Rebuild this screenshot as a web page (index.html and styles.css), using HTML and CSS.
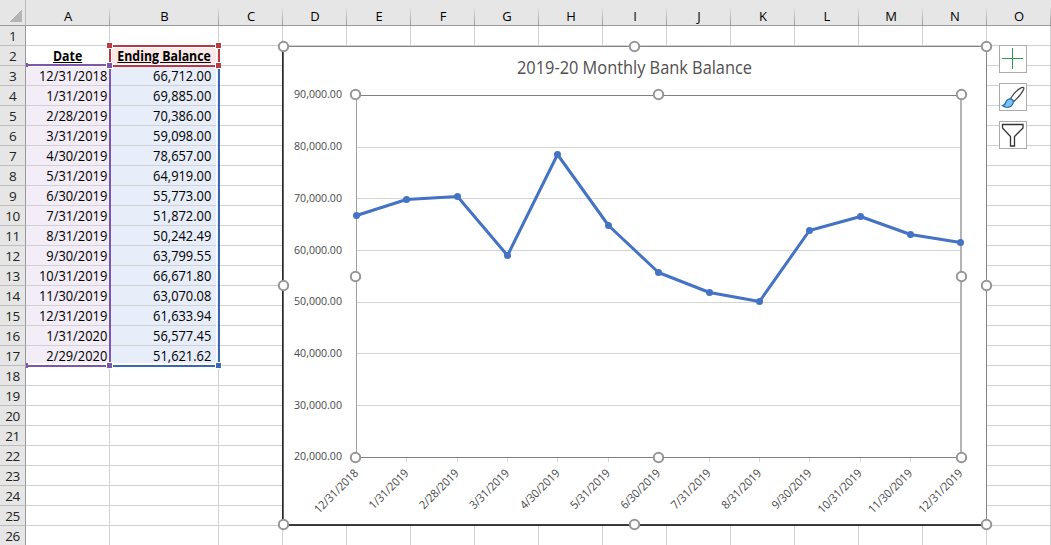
FILE: index.html
```
<!DOCTYPE html>
<html lang="en">
<head>
  <meta charset="UTF-8">
  <meta name="viewport" content="width=device-width, initial-scale=1.0">
  <title>Monthly Bank Balance</title>
  <link rel="stylesheet" href="styles.css">
</head>
<body>
  <div class="sheet">
    <table class="grid">
      <colgroup>
        <col class="col-num"><col class="col-a"><col class="col-b">
        <col class="col"><col class="col"><col class="col"><col class="col"><col class="col"><col class="col"><col class="col"><col class="col"><col class="col"><col class="col"><col class="col"><col class="col"><col class="col">
      </colgroup>
      <thead>
        <tr>
          <th class="corner"></th>
          <th>A</th><th>B</th><th>C</th><th>D</th><th>E</th><th>F</th><th>G</th><th>H</th><th>I</th><th>J</th><th>K</th><th>L</th><th>M</th><th>N</th><th>O</th>
        </tr>
      </thead>
      <tbody>
        <tr><th>1</th><td></td><td></td><td class="rest" colspan="13"></td></tr>
        <tr><th>2</th><td class="title"><u>Date</u></td><td class="title series"><u>Ending Balance</u></td><td class="rest" colspan="13"></td></tr>
        <tr><th>3</th><td class="date"><span>12/31/2018</span></td><td class="amount"><span>66,712.00</span></td><td class="rest" colspan="13"></td></tr>
        <tr><th>4</th><td class="date"><span>1/31/2019</span></td><td class="amount"><span>69,885.00</span></td><td class="rest" colspan="13"></td></tr>
        <tr><th>5</th><td class="date"><span>2/28/2019</span></td><td class="amount"><span>70,386.00</span></td><td class="rest" colspan="13"></td></tr>
        <tr><th>6</th><td class="date"><span>3/31/2019</span></td><td class="amount"><span>59,098.00</span></td><td class="rest" colspan="13"></td></tr>
        <tr><th>7</th><td class="date"><span>4/30/2019</span></td><td class="amount"><span>78,657.00</span></td><td class="rest" colspan="13"></td></tr>
        <tr><th>8</th><td class="date"><span>5/31/2019</span></td><td class="amount"><span>64,919.00</span></td><td class="rest" colspan="13"></td></tr>
        <tr><th>9</th><td class="date"><span>6/30/2019</span></td><td class="amount"><span>55,773.00</span></td><td class="rest" colspan="13"></td></tr>
        <tr><th>10</th><td class="date"><span>7/31/2019</span></td><td class="amount"><span>51,872.00</span></td><td class="rest" colspan="13"></td></tr>
        <tr><th>11</th><td class="date"><span>8/31/2019</span></td><td class="amount"><span>50,242.49</span></td><td class="rest" colspan="13"></td></tr>
        <tr><th>12</th><td class="date"><span>9/30/2019</span></td><td class="amount"><span>63,799.55</span></td><td class="rest" colspan="13"></td></tr>
        <tr><th>13</th><td class="date"><span>10/31/2019</span></td><td class="amount"><span>66,671.80</span></td><td class="rest" colspan="13"></td></tr>
        <tr><th>14</th><td class="date"><span>11/30/2019</span></td><td class="amount"><span>63,070.08</span></td><td class="rest" colspan="13"></td></tr>
        <tr><th>15</th><td class="date"><span>12/31/2019</span></td><td class="amount"><span>61,633.94</span></td><td class="rest" colspan="13"></td></tr>
        <tr><th>16</th><td class="date"><span>1/31/2020</span></td><td class="amount"><span>56,577.45</span></td><td class="rest" colspan="13"></td></tr>
        <tr><th>17</th><td class="date"><span>2/29/2020</span></td><td class="amount"><span>51,621.62</span></td><td class="rest" colspan="13"></td></tr>
        <tr><th>18</th><td></td><td></td><td class="rest" colspan="13"></td></tr>
        <tr><th>19</th><td></td><td></td><td class="rest" colspan="13"></td></tr>
        <tr><th>20</th><td></td><td></td><td class="rest" colspan="13"></td></tr>
        <tr><th>21</th><td></td><td></td><td class="rest" colspan="13"></td></tr>
        <tr><th>22</th><td></td><td></td><td class="rest" colspan="13"></td></tr>
        <tr><th>23</th><td></td><td></td><td class="rest" colspan="13"></td></tr>
        <tr><th>24</th><td></td><td></td><td class="rest" colspan="13"></td></tr>
        <tr><th>25</th><td></td><td></td><td class="rest" colspan="13"></td></tr>
        <tr><th>26</th><td></td><td></td><td class="rest" colspan="13"></td></tr>
      </tbody>
    </table>

    <!-- coloured outlines of the chart's source ranges -->
    <svg class="ranges" width="200" height="330" viewBox="24 42 200 330" shape-rendering="crispEdges">
      <g fill="#fff">
        <rect x="26" y="66" width="83" height="1"/>
        <rect x="26" y="363" width="83" height="2"/>
        <rect x="111" y="363" width="107" height="2"/>
        <rect x="111" y="47" width="106" height="1"/>
        <rect x="111" y="64" width="106" height="1"/>
        <rect x="111" y="47" width="1" height="18"/>
        <rect x="216" y="47" width="1" height="18"/>
        <rect x="216" y="68" width="1" height="296"/>
      </g>
      <path fill="#7d57a8" d="M26 64h83v2h-83zM109 67h2v298h-2zM26 365h83v2h-83z"/>
      <path fill="#3a68b5" d="M218 68h2v297h-2zM111 365h107v2h-107z"/>
      <path fill="#b73a45" d="M110 45h108v2h-108zM110 65h108v2h-108zM109 46h2v20h-2zM218 46h2v20h-2z"/>
      <g stroke="#fff">
        <path fill="#b73a45" d="M106.500 42.500h6v6h-6zM215.500 42.500h6v6h-6zM215.500 62.500h6v6h-6z"/>
        <path fill="#7d57a8" d="M106.500 62.500h6v6h-6zM106.500 362.500h6v6h-6z"/>
        <path fill="#3a68b5" d="M215.500 362.500h6v6h-6z"/>
      </g>
      <path fill="#7d57a8" d="M26 63h2v4h-2zM26 363h2v5h-2z"/>
    </svg>

    <svg class="chart" width="716" height="492" viewBox="277 40 716 492">
      <rect x="283" y="46" width="703" height="479" fill="#fff"/>
      <path class="edge" d="M282.900 46V525H986"/>
      <g shape-rendering="crispEdges">
        <path class="frame" d="M283 46.500H986M986.500 46V525"/>
        <path class="rule" d="M356 147.500H961M356 198.500H961M356 250.500H961M356 302.500H961M356 353.500H961M356 405.500H961"/>
        <path class="rule" d="M406.500 458v4M457.500 458v4M507.500 458v4M557.500 458v4M608.500 458v4M658.500 458v4M709.500 458v4M759.500 458v4M809.500 458v4M860.500 458v4M910.500 458v4"/>
        <path class="plot" d="M356 95.500H961M356 457.500H961"/>
        <path class="plot side" d="M356.500 95V457"/>
        <path class="plot side wide" d="M961 95V457"/>
      </g>

      <text class="heading" x="517" y="74" textLength="235" lengthAdjust="spacingAndGlyphs">2019-20 Monthly Bank Balance</text>

      <g class="labels">
        <text x="294" y="98" textLength="48" lengthAdjust="spacingAndGlyphs">90,000.00</text>
        <text x="294" y="150" textLength="48" lengthAdjust="spacingAndGlyphs">80,000.00</text>
        <text x="294" y="202" textLength="48" lengthAdjust="spacingAndGlyphs">70,000.00</text>
        <text x="294" y="254" textLength="48" lengthAdjust="spacingAndGlyphs">60,000.00</text>
        <text x="294" y="305" textLength="48" lengthAdjust="spacingAndGlyphs">50,000.00</text>
        <text x="294" y="357" textLength="48" lengthAdjust="spacingAndGlyphs">40,000.00</text>
        <text x="294" y="409" textLength="48" lengthAdjust="spacingAndGlyphs">30,000.00</text>
        <text x="294" y="460" textLength="48" lengthAdjust="spacingAndGlyphs">20,000.00</text>
      </g>

      <g class="labels dates">
        <text transform="translate(359 474) rotate(-45) scale(.93 1)">12/31/2018</text>
        <text transform="translate(409.400 474) rotate(-45) scale(.93 1)">1/31/2019</text>
        <text transform="translate(459.700 474) rotate(-45) scale(.93 1)">2/28/2019</text>
        <text transform="translate(510 474) rotate(-45) scale(.93 1)">3/31/2019</text>
        <text transform="translate(560.500 474) rotate(-45) scale(.93 1)">4/30/2019</text>
        <text transform="translate(610.800 474) rotate(-45) scale(.93 1)">5/31/2019</text>
        <text transform="translate(661 474) rotate(-45) scale(.93 1)">6/30/2019</text>
        <text transform="translate(711.600 474) rotate(-45) scale(.93 1)">7/31/2019</text>
        <text transform="translate(762 474) rotate(-45) scale(.93 1)">8/31/2019</text>
        <text transform="translate(812.300 474) rotate(-45) scale(.93 1)">9/30/2019</text>
        <text transform="translate(862.700 474) rotate(-45) scale(.93 1)">10/31/2019</text>
        <text transform="translate(913 474) rotate(-45) scale(.93 1)">11/30/2019</text>
        <text transform="translate(963.400 474) rotate(-45) scale(.93 1)">12/31/2019</text>
      </g>

      <polyline class="line" points="356.500,215.500 406.500,199.500 457.500,196.500 507.500,255.500 557.500,154.500 608.500,225.500 658.500,272.500 709.500,292.500 759.500,301.500 809.500,230.500 860.500,216.500 910.500,234.500 960.500,242.500"/>
      <g class="dots">
        <circle cx="356.500" cy="215.500" r="3.500"/>
        <circle cx="406.500" cy="199.500" r="3.500"/>
        <circle cx="457.500" cy="196.500" r="3.500"/>
        <circle cx="507.500" cy="255.500" r="3.500"/>
        <circle cx="557.500" cy="154.500" r="3.500"/>
        <circle cx="608.500" cy="225.500" r="3.500"/>
        <circle cx="658.500" cy="272.500" r="3.500"/>
        <circle cx="709.500" cy="292.500" r="3.500"/>
        <circle cx="759.500" cy="301.500" r="3.500"/>
        <circle cx="809.500" cy="230.500" r="3.500"/>
        <circle cx="860.500" cy="216.500" r="3.500"/>
        <circle cx="910.500" cy="234.500" r="3.500"/>
        <circle cx="960.500" cy="242.500" r="3.500"/>
      </g>

      <g class="handles">
        <circle cx="283.500" cy="46.500" r="4.700"/>
        <circle cx="634.500" cy="46.500" r="4.700"/>
        <circle cx="986.500" cy="46.500" r="4.700"/>
        <circle cx="283.500" cy="285.500" r="4.700"/>
        <circle cx="986.500" cy="285.500" r="4.700"/>
        <circle cx="283.500" cy="524.500" r="4.700"/>
        <circle cx="634.500" cy="524.500" r="4.700"/>
        <circle cx="986.500" cy="524.500" r="4.700"/>
        <circle cx="355.500" cy="94.500" r="4.700"/>
        <circle cx="658.500" cy="94.500" r="4.700"/>
        <circle cx="961.500" cy="94.500" r="4.700"/>
        <circle cx="355.500" cy="276.500" r="4.700"/>
        <circle cx="961.500" cy="276.500" r="4.700"/>
        <circle cx="355.500" cy="457.500" r="4.700"/>
        <circle cx="658.500" cy="457.500" r="4.700"/>
        <circle cx="961.500" cy="457.500" r="4.700"/>
      </g>
    </svg>

    <div class="tools">
      <button aria-label="Chart Elements">
        <svg width="26" height="26" viewBox="0 0 26 26"><path d="M12.500 2v21M2 12.500h21" stroke="#2e9a52" fill="none"/></svg>
      </button>
      <button aria-label="Chart Styles">
        <svg width="26" height="26" viewBox="0 0 26 26">
          <path d="M10.500 14.500Q16 6 21.500 3.600Q24.500 2.600 23.600 5.400Q21 11 13.800 17.500z" fill="#fff" stroke="#444" stroke-width="1.300"/>
          <path d="M2.500 21.500Q5 21.300 5.600 18.500Q7.200 14.600 10.500 14.800Q13.800 15.800 13.200 19Q11.500 23.800 6 23.200Q3.800 22.800 2.500 21.500z" fill="#7cc0f5" stroke="#1f6fb5" stroke-width="1.200"/>
        </svg>
      </button>
      <button aria-label="Chart Filters">
        <svg width="26" height="26" viewBox="0 0 26 26"><path d="M2.500 2.500h20.500v3.500l-8.500 8.500v9.500h-4v-9.500l-8-8.500z" fill="#fff" stroke="#333" stroke-width="1.300"/></svg>
      </button>
    </div>
  </div>
</body>
</html>
```
FILE: styles.css
```
* {
  box-sizing: border-box;
}

body {
  margin: 0;
  overflow: hidden;
  background: #fff;
  font-family: "Open Sans", "Noto Sans", sans-serif;
  color: #000;
}

.sheet {
  position: relative;
  width: 1051px;
  height: 545px;
  overflow: hidden;
}

.grid {
  width: 1051px;
  table-layout: fixed;
  border-collapse: separate;
  border-spacing: 0;
  font-size: 14px;
  line-height: 18px;
}

.col-num {
  width: 26px;
}

.col-a {
  width: 84px;
}

.col-b {
  width: 109px;
}

.col {
  width: 64px;
}

.grid th,
.grid td {
  height: 20px;
  padding: 0;
  border-right: 1px solid #d0d0d0;
  border-bottom: 1px solid #d0d0d0;
  white-space: nowrap;
}

.grid th {
  background: #e6e6e6;
  border-color: #999;
  font-weight: normal;
  font-size: 13px;
}

/* column letters, the separators fade out towards the top */
.grid thead th {
  height: 26px;
  padding-top: 6px;
  border-right: 0;
  background: linear-gradient(#e6e6e6, #999) right 6px / 1px 20px no-repeat #e6e6e6;
}

.grid thead .corner {
  background: linear-gradient(to bottom right, transparent 50%, #b4b4b4 50%) 10px 10px / 12px 12px no-repeat #e6e6e6;
  border-right: 1px solid #bbb;
}

.grid tbody th {
  padding-top: 2px;
  border-bottom-color: #bdbdbd;
  color: #222;
  font-size: 13.5px;
  line-height: 17px;
  letter-spacing: -.5px;
}

/* columns C to O */
.grid .rest {
  border-right: 0;
  background: repeating-linear-gradient(to right, transparent 0 63px, #d0d0d0 63px 64px);
}

.grid .title {
  text-align: center;
  font-weight: bold;
}

.grid .title u {
  display: inline-block;
  margin: 0 -10px;
  text-decoration: underline;
  transform: scaleX(.88);
}

.grid .series {
  background: #fbe9e7;
}

.grid .date {
  padding-right: 2px;
  background: #f2edf6;
  text-align: right;
}

.grid .amount {
  padding-right: 7px;
  background: #e7eef9;
  text-align: right;
}

/* narrow digits */
.date span,
.amount span {
  display: inline-block;
  transform: scaleX(.92);
  transform-origin: right;
}

.ranges {
  position: absolute;
  left: 24px;
  top: 42px;
}

.chart {
  position: absolute;
  left: 277px;
  top: 40px;
}

.frame {
  fill: none;
  stroke: #858585;
}

.edge {
  fill: none;
  stroke: #000;
  stroke-width: 1.4;
}

.rule {
  stroke: #d4d4d4;
}

.plot {
  stroke: #7f7f7f;
}

.side {
  stroke: #a0a0a0;
}

.wide {
  stroke: #b4b4b4;
  stroke-width: 2;
}

.heading {
  font-size: 17.5px;
  fill: #505050;
}

.labels {
  font-size: 11.5px;
  fill: #484848;
}

.dates {
  text-anchor: end;
}

.line {
  fill: none;
  stroke: #4472c4;
  stroke-width: 3;
  stroke-linejoin: round;
}

.dots {
  fill: #4472c4;
}

.handles {
  fill: #fff;
  stroke: #969696;
  stroke-width: 2;
}

.tools {
  position: absolute;
  left: 999px;
  top: 45px;
  display: flex;
  flex-direction: column;
  gap: 10px;
}

.tools button {
  width: 28px;
  height: 28px;
  padding: 0;
  border: 1px solid #ababab;
  background: #fff;
}

.tools svg {
  display: block;
}
```
